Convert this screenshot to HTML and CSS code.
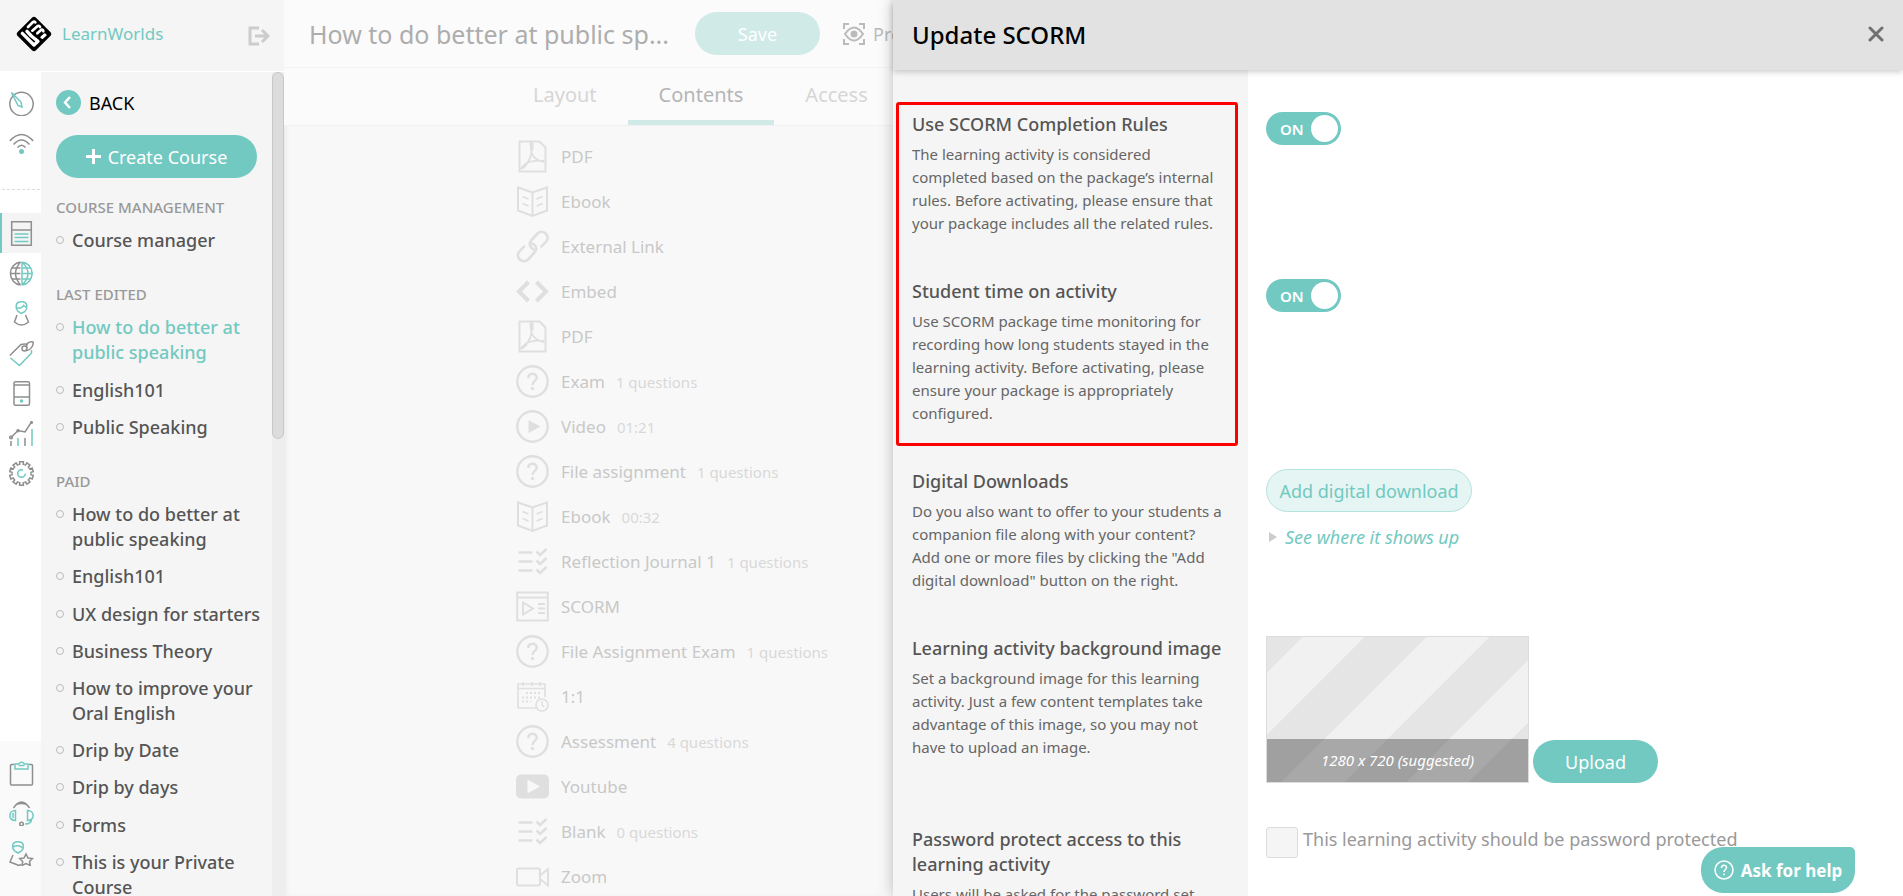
FILE: index.html
```html
<!DOCTYPE html>
<html lang="en">
<head>
    <meta charset="UTF-8">
    <meta name="viewport" content="width=device-width, initial-scale=1.0">
    <title>Update SCORM - LearnWorlds</title>
    <link rel="stylesheet" href="styles.css">
</head>
<body>
    <!-- shared icons -->
    <svg class="sprite" aria-hidden="true">
        <symbol id="i-pdf" viewBox="0 0 33 33">
            <path d="M3.500 1.500h20l6 6v24h-26z"/>
            <path d="M15.500 2c-2 4 0 8 0 11-1 6-5 12-10 15M15.500 13c2 5 6 8 13 9M9 24c5-3 12-4 19-3" stroke-width="1.800"/>
            <path d="M4 29c2-3 4-5 7-5-1 3-4 5-7 5zM14 3h3v7h-2z" fill="currentColor" stroke-width="1"/>
        </symbol>
        <symbol id="i-book" viewBox="0 0 33 33">
            <path d="M16.500 7.500 2 2.500v23l14.500 5.500 14.500-5.500v-23zM16.500 7.500V30"/>
            <path d="M6.500 11.500l6 2.500M6.500 18.500l6 2.500M26.500 11.500l-6 2.500M26.500 18.500l-6 2.500" stroke-width="1.800"/>
        </symbol>
        <symbol id="i-link" viewBox="0 0 33 33">
            <path d="M17.500 19.500c-4-2-5-6-2-9.500l6-6.500c5-5 13 2 9 7.500l-5 5.500" stroke-width="2.600" stroke-linecap="round"/>
            <path d="M15.500 13.500c5 1 6 6 2.500 9.500l-6 6.500c-5 5-13-2-9-7.500l5-5.500" stroke-width="2.600" stroke-linecap="round"/>
        </symbol>
        <symbol id="i-embed" viewBox="0 0 33 33">
            <path d="M12.500 7 3 16.500l9.500 9.500M20.500 7l9.500 9.500-9.500 9.500" stroke-width="4"/>
        </symbol>
        <symbol id="i-quest" viewBox="0 0 33 33">
            <circle cx="16.500" cy="16.500" r="15.200" stroke-width="2.400"/>
            <path d="M12.300 13c0-5.500 8.400-5.500 8.400-.5 0 3.500-4.200 3.200-4.200 7.500" stroke-width="2.400"/>
            <circle cx="16.500" cy="23.500" r="1.700" fill="currentColor" stroke="none"/>
        </symbol>
        <symbol id="i-play" viewBox="0 0 33 33">
            <circle cx="16.500" cy="16.500" r="15.200" stroke-width="2.400"/>
            <path d="M12.500 10v13l12-6.500z" fill="currentColor" stroke="none"/>
        </symbol>
        <symbol id="i-check" viewBox="0 0 33 33">
            <path d="M2.500 7.500h14M2.500 16.500h14M2.500 25.500h14" stroke-width="2.600"/>
            <path d="M20.500 6.500l3.500 3.500 6.500-6M20.500 15.500l3.500 3.500 6.500-6M20.500 24.500l3.500 3.500 6.500-6" stroke-width="2.600"/>
        </symbol>
        <symbol id="i-scorm" viewBox="0 0 33 33">
            <path d="M1.200 2.500h30.600v28H1.200zM1 7.500h31"/>
            <path d="M7 12.500v12l10-6zM22 14h7M22 18.500h7M22 23h7"/>
        </symbol>
        <symbol id="i-cal" viewBox="0 0 33 33">
            <path d="M20 28H3a1 1 0 0 1-1-1V4h27v13M2 8.500h27M7 2v4M16 2v4M24 2v4" stroke-width="1.600"/>
            <path d="M10 13h16M6 17.500h18M6 21.500h9" stroke-width="2" stroke-dasharray="2 2"/>
            <circle cx="26" cy="25" r="6" stroke-width="1.600"/>
            <path d="M26 21v4l2 2" stroke-width="1.400"/>
        </symbol>
        <symbol id="i-tube" viewBox="0 0 33 33">
            <path fill-rule="evenodd" d="M5 4.500h23a5 5 0 0 1 5 5v14a5 5 0 0 1-5 5H5a5 5 0 0 1-5-5v-14a5 5 0 0 1 5-5zM11.500 9.500v14l12.500-7z" fill="currentColor" stroke="none"/>
        </symbol>
        <symbol id="i-cam" viewBox="0 0 33 33">
            <rect x="1" y="8.500" width="23" height="17" rx="2"/>
            <path d="M24 15.500l8-6.500v16.500l-8-6.500"/>
        </symbol>
    </svg>

    <div class="app">
        <aside class="sidebar">
            <header class="brand">
                <svg class="brand-logo" viewBox="12 12 108 108">
                    <path d="M66 23l43 43-43 43-43-43z" fill="#000" stroke="#000" stroke-width="17" stroke-linejoin="round"/>
                    <g fill="none" stroke="#fff" stroke-width="8" stroke-linejoin="round" stroke-linecap="round">
                        <path d="M48 45l15-15q4-3 7 1M61 56l16-14q5-2 7 3M76 64l12-11q6-1 6 5"/>
                        <path d="M31 64l35 35 12-11-20-16-13-14" stroke-width="10"/>
                        <path d="M88 76l10-9 3 2-10 9z" stroke-width="6"/>
                    </g>
                </svg>
                <a class="brand-name" href="#">LearnWorlds</a>
                <button class="icon-button" aria-label="Log out">
                    <svg width="22" height="20" viewBox="0 0 22 20" fill="none" stroke="#ccc" stroke-width="3">
                        <path d="M11 2H2v16h9M7 10h12M14 4l6 6-6 6"/>
                    </svg>
                </button>
            </header>
            <div class="sidebar-body">
                <nav class="rail" aria-label="Sections">
                    <a class="rail-item" href="#" aria-label="Dashboard">
                        <svg viewBox="0 0 25 25"><circle cx="12.500" cy="13" r="11.700"/><path class="teal" d="M2.500 1.500l9.500 9.500 1 5-4-1.500z"/></svg>
                    </a>
                    <a class="rail-item" href="#" aria-label="Activity">
                        <svg viewBox="0 0 25 25"><path d="M.8 10q11.700-13 23.400 0M4.500 13.500q8-9 16 0M8.500 16.500q4-4.500 8 0"/><circle cx="12.500" cy="20.500" r="2.500" fill="#72c9c1" stroke="none"/></svg>
                    </a>
                    <hr class="rail-line">
                    <a class="rail-item active" href="#" aria-label="Courses">
                        <svg viewBox="0 0 25 25"><path d="M2.700.8h19.600v23.400H2.700zM3 9h19"/><path class="teal" d="M5.500 13h14M5.500 16.500h14M5.500 20.500h14"/></svg>
                    </a>
                    <a class="rail-item" href="#" aria-label="Website">
                        <svg viewBox="0 0 25 25"><path d="M11.500 1a11.600 11.600 0 0 0 0 23M11.500 1q-10 11.500 0 23M1 12.500h10.500M3 7h8.500M3 18h8.500"/><path class="teal" d="M13 .8v23.400M13 1a11.600 11.600 0 0 1 0 23M13 1q12 11.500 0 23M13 12.500h11M13 7h9M13 18h9"/></svg>
                    </a>
                    <a class="rail-item" href="#" aria-label="Users">
                        <svg viewBox="0 0 25 25"><path d="M8 14l-2.500 7q7 6 14 0l-3-7"/><path class="teal" d="M12.500.8c7 0 6 7 3.500 9.500l-3.500 2-3.500-2C6.500 7.800 5.500.8 12.500.8zM7.500 7q6 .5 7-2.500l3 2"/></svg>
                    </a>
                    <a class="rail-item" href="#" aria-label="Marketing">
                        <svg viewBox="0 0 25 25"><path d="M.8 14.500L12 3.500q4-1 7 0"/><circle cx="15.500" cy="7.500" r="2.500"/><path d="M16 9c5 2 9-5 8-8-4-1-8 2-6 6"/><path class="teal" d="M1.500 17l9 7.500L22.500 12V9"/></svg>
                    </a>
                    <a class="rail-item" href="#" aria-label="Mobile app">
                        <svg viewBox="0 0 25 25"><rect x="5" y=".8" width="15.500" height="23.400" rx="1.500"/><path d="M5 4h15M5 16h15"/><circle cx="12.500" cy="20" r="1.800" fill="#72c9c1" stroke="none"/></svg>
                    </a>
                    <a class="rail-item" href="#" aria-label="Reports">
                        <svg viewBox="0 0 25 25"><path d="M2 16.500L9 9.500l7 1.500 6.500-10M2 20v5M16 17v8"/><path class="teal" d="M9 17v8M23 8v17"/><circle cx="2" cy="16.500" r="1.300"/><circle cx="9" cy="9.800" r="1"/><circle cx="22.500" cy="1.500" r=".8"/></svg>
                    </a>
                    <a class="rail-item" href="#" aria-label="Settings">
                        <svg viewBox="-12.500 -12.500 25 25">
                            <path id="tooth" d="M-2.940-9.040L-1.700-9.300-1.900-11.800H1.900L1.700-9.300 2.940-9.040"/>
                            <use href="#tooth" transform="rotate(36)"/><use href="#tooth" transform="rotate(72)"/><use href="#tooth" transform="rotate(108)"/>
                            <use href="#tooth" transform="rotate(144)"/><use href="#tooth" transform="rotate(180)"/><use href="#tooth" transform="rotate(216)"/>
                            <use href="#tooth" transform="rotate(252)"/><use href="#tooth" transform="rotate(288)"/><use href="#tooth" transform="rotate(324)"/>
                            <circle class="teal" r="3.800" stroke-dasharray="19 5"/>
                        </svg>
                    </a>
                    <div class="rail-bottom">
                        <a class="rail-item" href="#" aria-label="Notes">
                            <svg viewBox="0 0 25 25"><path d="M5 3.500H2.500a1 1 0 0 0-1 1V23a1 1 0 0 0 1 1h20a1 1 0 0 0 1-1V4.500a1 1 0 0 0-1-1H20"/><path class="teal" d="M6 3h3.500q3-3.500 6 0H19v5H6zM9.500 4.500h6"/></svg>
                        </a>
                        <a class="rail-item" href="#" aria-label="Support">
                            <svg viewBox="0 0 25 25"><path d="M4.500 7q8-12 16 0M6.500 4q6-3 12 0"/><circle cx="12.500" cy="23" r="1.800"/><path class="teal" d="M6.500 9.500v10C-1 20-1 9.500 6.500 9.500zM18.500 9.500v10c7.500.5 7.500-10 0-10zM22.500 18c0 4-3 5-6.500 5M4 12v5"/></svg>
                        </a>
                        <a class="rail-item" href="#" aria-label="Experts">
                            <svg viewBox="0 0 25 25"><path d="M4 14l-3 7 9 3.500 2-1M17 13l2 4 4.500.5-3 3 .8 4-4.300-2-4 2 .7-4-3-3 4.300-.5z"/><path class="teal" d="M9 .8c7 0 6 6.500 3.500 9L9 12 5.500 9.800C3 7.300 2 .8 9 .8zM4 6q5-3 10 1"/></svg>
                        </a>
                    </div>
                </nav>

                <div class="menu">
                    <a class="back" href="#">
                        <svg width="25" height="25" viewBox="0 0 25 25"><circle cx="12.500" cy="12.500" r="12.500" fill="#72c9c1"/><path d="M14 7l-5 5.500 5 5.500" fill="none" stroke="#fff" stroke-width="2.500"/></svg>
                        BACK
                    </a>
                    <button class="button create">
                        <svg width="15" height="15" viewBox="0 0 15 15" stroke="#fff" stroke-width="3"><path d="M7.500 0v15M0 7.500h15"/></svg>
                        Create Course
                    </button>
                    <h2>COURSE MANAGEMENT</h2>
                    <ul>
                        <li><a href="#">Course manager</a></li>
                    </ul>
                    <h2>LAST EDITED</h2>
                    <ul>
                        <li><a class="current" href="#">How to do better at public speaking</a></li>
                        <li><a href="#">English101</a></li>
                        <li><a href="#">Public Speaking</a></li>
                    </ul>
                    <h2>PAID</h2>
                    <ul>
                        <li><a href="#">How to do better at public speaking</a></li>
                        <li><a href="#">English101</a></li>
                        <li><a href="#">UX design for starters</a></li>
                        <li><a href="#">Business Theory</a></li>
                        <li><a href="#">How to improve your Oral English</a></li>
                        <li><a href="#">Drip by Date</a></li>
                        <li><a href="#">Drip by days</a></li>
                        <li><a href="#">Forms</a></li>
                        <li><a href="#">This is your Private Course</a></li>
                    </ul>
                </div>
                <div class="scrollbar"><div class="thumb"></div></div>
            </div>
        </aside>

        <main class="editor">
            <div class="topbar">
                <h1>How to do better at public sp...</h1>
                <button class="button save">Save</button>
                <button class="preview">
                    <svg width="22" height="22" viewBox="0 0 22 22" fill="none" stroke="currentColor" stroke-width="2">
                        <path d="M1 6V1h5M16 1h5v5M21 16v5h-5M6 21H1v-5M2 11q9-13 18 0-9 13-18 0z"/>
                        <circle cx="11" cy="11" r="2.500" fill="currentColor"/>
                    </svg>
                    Preview
                </button>
            </div>
            <nav class="tabs">
                <a href="#">Layout</a>
                <a class="selected" href="#">Contents</a>
                <a href="#">Access</a>
            </nav>
            <ul class="activities">
                <li><svg><use href="#i-pdf"/></svg>PDF</li>
                <li><svg><use href="#i-book"/></svg>Ebook</li>
                <li><svg><use href="#i-link"/></svg>External Link</li>
                <li><svg><use href="#i-embed"/></svg>Embed</li>
                <li><svg><use href="#i-pdf"/></svg>PDF</li>
                <li><svg><use href="#i-quest"/></svg>Exam <small>1 questions</small></li>
                <li><svg><use href="#i-play"/></svg>Video <small>01:21</small></li>
                <li><svg><use href="#i-quest"/></svg>File assignment <small>1 questions</small></li>
                <li><svg><use href="#i-book"/></svg>Ebook <small>00:32</small></li>
                <li><svg><use href="#i-check"/></svg>Reflection Journal 1 <small>1 questions</small></li>
                <li><svg><use href="#i-scorm"/></svg>SCORM</li>
                <li><svg><use href="#i-quest"/></svg>File Assignment Exam <small>1 questions</small></li>
                <li><svg><use href="#i-cal"/></svg>1:1</li>
                <li><svg><use href="#i-quest"/></svg>Assessment <small>4 questions</small></li>
                <li><svg><use href="#i-tube"/></svg>Youtube</li>
                <li><svg><use href="#i-check"/></svg>Blank <small>0 questions</small></li>
                <li><svg><use href="#i-cam"/></svg>Zoom</li>
            </ul>
        </main>

        <section class="drawer">
            <header class="drawer-header">
                <h2>Update SCORM</h2>
                <button class="icon-button" aria-label="Close">
                    <svg width="16" height="16" viewBox="0 0 16 16" stroke="#707070" stroke-width="3" stroke-linecap="round"><path d="M2 2l12 12M14 2L2 14"/></svg>
                </button>
            </header>
            <div class="settings">
                <div class="highlight"></div>
                <div class="setting">
                    <div class="about">
                        <h3 id="completion">Use SCORM Completion Rules</h3>
                        <p>The learning activity is considered completed based on the package’s internal rules. Before activating, please ensure that your package includes all the related rules.</p>
                    </div>
                    <div class="control">
                        <label class="toggle"><input type="checkbox" checked aria-labelledby="completion"><span>ON</span></label>
                    </div>
                </div>
                <div class="setting">
                    <div class="about">
                        <h3 id="time">Student time on activity</h3>
                        <p>Use SCORM package time monitoring for recording how long students stayed in the learning activity. Before activating, please ensure your package is appropriately configured.</p>
                    </div>
                    <div class="control">
                        <label class="toggle"><input type="checkbox" checked aria-labelledby="time"><span>ON</span></label>
                    </div>
                </div>
                <div class="setting">
                    <div class="about">
                        <h3>Digital Downloads</h3>
                        <p>Do you also want to offer to your students a companion file along with your content? Add one or more files by clicking the "Add digital download" button on the right.</p>
                    </div>
                    <div class="control">
                        <button class="button outline">Add digital download</button>
                        <a class="where" href="#">See where it shows up</a>
                    </div>
                </div>
                <div class="setting">
                    <div class="about">
                        <h3>Learning activity background image</h3>
                        <p>Set a background image for this learning activity. Just a few content templates take advantage of this image, so you may not have to upload an image.</p>
                    </div>
                    <div class="control upload">
                        <div class="placeholder"><span>1280 x 720 (suggested)</span></div>
                        <button class="button">Upload</button>
                    </div>
                </div>
                <div class="setting">
                    <div class="about">
                        <h3>Password protect access to this learning activity</h3>
                        <p>Users will be asked for the password set</p>
                    </div>
                    <div class="control">
                        <label class="protect"><input type="checkbox">This learning activity should be password protected</label>
                    </div>
                </div>
            </div>
        </section>
    </div>

    <button class="help">
        <svg width="20" height="20" viewBox="0 0 20 20" fill="none" stroke="#fff" stroke-width="1.500">
            <circle cx="10" cy="10" r="9"/>
            <path d="M7.500 8c0-3.500 5-3.500 5-.5 0 2-2.500 2-2.500 4.500M10 13.500v1.800"/>
        </svg>
        Ask for help
    </button>
</body>
</html>
```
FILE: styles.css
```css
* {
    margin: 0;
    padding: 0;
    box-sizing: border-box;
}

body {
    font-family: "Segoe UI", "Noto Sans", "Open Sans", sans-serif;
    font-size: 18px;
    color: #555;
    height: 100vh;
    overflow: hidden;
}

a {
    color: inherit;
    text-decoration: none;
}

ul {
    list-style: none;
}

button {
    font: inherit;
    border: none;
    background: none;
    cursor: pointer;
}

.sprite {
    display: none;
}

.app {
    display: flex;
    height: 100vh;
}

.button {
    min-width: 125px;
    height: 43px;
    border-radius: 22px;
    background: #72c9c1;
    color: #fff;
}

.icon-button {
    display: flex;
}

/* Sidebar */

.sidebar {
    width: 284px;
    flex-shrink: 0;
    display: flex;
    flex-direction: column;
    background: #f5f5f5;
}

.brand {
    height: 72px;
    flex-shrink: 0;
    display: flex;
    align-items: center;
    padding: 0 14px 4px 16px;
    border-bottom: 1px solid #fff;
}

.brand-logo {
    width: 36px;
    height: 36px;
}

.brand-name {
    margin-left: 10px;
    font-size: 17px;
    color: #72c9c1;
}

.brand .icon-button {
    margin-left: auto;
    padding-top: 4px;
}

.sidebar-body {
    flex: 1;
    min-height: 0;
    display: flex;
}

.rail {
    width: 41px;
    flex-shrink: 0;
    display: flex;
    flex-direction: column;
    padding-top: 11px;
    background: #fff;
}

.rail-item {
    height: 40px;
    flex-shrink: 0;
    display: flex;
    align-items: center;
    padding-left: 9px;
}

.rail-item.active {
    padding-left: 7px;
    border-left: 2px solid #72c9c1;
    background: #f4f4f4;
}

.rail svg {
    width: 25px;
    height: 25px;
    fill: none;
    stroke: #8f8f8f;
    stroke-width: 1.5;
}

.rail .teal {
    stroke: #72c9c1;
}

.rail-line {
    margin: 26px 1px 23px 2px;
    border: none;
    border-top: 1px dashed #ddd;
}

.rail-bottom {
    margin-top: auto;
    padding: 12px 0 23px;
    background: #fafafa;
}

.menu {
    flex: 1;
    overflow: hidden;
    padding: 18px 10px 0 15px;
}

.back {
    display: flex;
    align-items: center;
    gap: 8px;
    height: 25px;
    color: #000;
}

.create {
    display: flex;
    align-items: center;
    justify-content: center;
    gap: 7px;
    width: 201px;
    margin-top: 20px;
}

.menu h2 {
    margin: 31px 0 11px;
    font-size: 15px;
    line-height: 20px;
    font-weight: 500;
    color: #999;
}

.create + h2 {
    margin-top: 19px;
}

.menu ul {
    display: grid;
    gap: 12px;
}

.menu li {
    display: flex;
    gap: 8px;
    line-height: 1.4;
    font-weight: 500;
}

.menu li::before {
    content: "";
    width: 6px;
    height: 6px;
    flex-shrink: 0;
    margin-top: 8px;
    border: 1px solid #bbb;
    border-radius: 50%;
}

.menu .current {
    color: #72c9c1;
}

.scrollbar {
    width: 12px;
    flex-shrink: 0;
    background: #eee;
}

.thumb {
    height: 367px;
    border: 1px solid #c8c8c8;
    border-radius: 6px;
    background: #dcdcdc;
}

/* Course editor behind the drawer */

.editor {
    flex: 0 0 609px;
    overflow: hidden;
    background: #f8f8f8;
    box-shadow: inset 4px 0 6px -3px rgba(0, 0, 0, 0.08);
}

.topbar {
    height: 68px;
    display: flex;
    align-items: center;
    padding-left: 25px;
    border-bottom: 1px solid #f4f4f4;
    background: #fbfbfb;
    white-space: nowrap;
}

.topbar h1 {
    width: 386px;
    flex-shrink: 0;
    font-size: 25px;
    font-weight: 400;
    color: #adadad;
}

.save {
    background: #d0ebe7;
}

.preview {
    display: flex;
    align-items: center;
    gap: 8px;
    margin-left: 23px;
    color: #bbb;
}

.tabs {
    height: 58px;
    display: flex;
    padding-left: 218px;
    border-bottom: 1px solid #f1f1f1;
    background: #fbfbfb;
    color: #d6d6d6;
    font-size: 20px;
    line-height: 53px;
}

.tabs a {
    padding: 0 31px;
}

.tabs .selected {
    color: #b5b5b5;
    border-bottom: 5px solid #d0ebe7;
}

.activities {
    padding: 8px 0 0 232px;
    font-size: 17px;
    color: #c8c8c8;
}

.activities li {
    height: 45px;
    display: flex;
    align-items: center;
    white-space: nowrap;
}

.activities svg {
    width: 33px;
    height: 33px;
    margin-right: 12px;
    flex-shrink: 0;
    fill: none;
    color: #dfdfdf;
    stroke: #dfdfdf;
    stroke-width: 2;
}

.activities small {
    margin-left: 11px;
    font-size: 15px;
    color: #d8d8d8;
}

/* Drawer */

.drawer {
    flex: 1;
    display: flex;
    flex-direction: column;
    z-index: 1;
    background: linear-gradient(to right, #f5f5f5 355px, #fff 355px);
    box-shadow: 0 0 14px rgba(0, 0, 0, 0.25);
}

.drawer-header {
    height: 70px;
    flex-shrink: 0;
    display: flex;
    align-items: center;
    justify-content: space-between;
    padding: 0 19px 2px;
    background: #e2e2e2;
    box-shadow: 0 2px 6px rgba(0, 0, 0, 0.2);
}

.drawer-header h2 {
    font-size: 24px;
    font-weight: 500;
    color: #000;
}

.settings {
    position: relative;
    flex: 1;
    overflow: hidden;
    padding-top: 42px;
}

/* frame drawn over the two SCORM options */
.highlight {
    position: absolute;
    top: 32px;
    left: 3px;
    width: 342px;
    height: 344px;
    border: 3px solid #f00;
    border-radius: 3px;
}

.setting {
    display: grid;
    grid-template-columns: 355px 1fr;
    padding-bottom: 44px;
}

.about {
    padding: 0 23px 0 19px;
}

.about h3 {
    margin-bottom: 6px;
    font-size: 18px;
    line-height: 25px;
    font-weight: 500;
}

.about p {
    font-size: 15px;
    line-height: 23px;
    color: #666;
}

.control {
    padding-left: 18px;
}

.toggle {
    display: flex;
    align-items: center;
    justify-content: space-between;
    width: 75px;
    height: 33px;
    padding: 0 3px 0 14px;
    border-radius: 17px;
    background: #72c9c1;
    color: #fff;
    font-size: 15px;
    font-weight: 600;
}

.toggle input {
    order: 1;
    appearance: none;
    width: 27px;
    height: 27px;
    border-radius: 50%;
    background: #fff;
}

.outline {
    display: block;
    width: 206px;
    border: 1px solid #b4e2dd;
    background: #e5f5f3;
    color: #72c9c1;
}

.where {
    display: flex;
    align-items: center;
    gap: 8px;
    margin: 13px 0 0 3px;
    font-style: italic;
    color: #72c9c1;
}

.where::before {
    content: "";
    border: 5px solid transparent;
    border-left: 8px solid #ccc;
    border-right: 0;
}

.upload {
    display: flex;
    align-items: flex-start;
    gap: 4px;
}

.upload .button {
    margin-top: 104px;
}

.placeholder {
    display: flex;
    align-items: flex-end;
    width: 263px;
    height: 147px;
    border: 1px solid #dcdcdc;
    background: repeating-linear-gradient(135deg, #e5e5e5 0 25px, #f1f1f1 25px 69px, #e5e5e5 69px 88px);
}

.placeholder span {
    width: 100%;
    background: rgba(0, 0, 0, 0.3);
    color: #fff;
    font-size: 15px;
    font-style: italic;
    line-height: 43px;
    text-align: center;
}

.protect {
    display: flex;
    gap: 5px;
    line-height: 25px;
    color: #999;
}

.protect input {
    appearance: none;
    width: 32px;
    height: 31px;
    border: 1px solid #dcdcdc;
    border-radius: 3px;
    background: #f5f5f5;
}

.help {
    position: fixed;
    right: 48px;
    bottom: 3px;
    display: flex;
    align-items: center;
    justify-content: center;
    gap: 7px;
    width: 154px;
    height: 46px;
    border-radius: 22px 5px 22px 22px;
    background: #72c9c1;
    color: #fff;
    font-size: 17px;
    font-weight: 700;
    z-index: 2;
}
```
